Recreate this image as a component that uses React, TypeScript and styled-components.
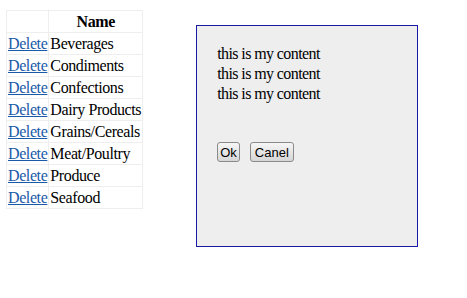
import React, { FC } from 'react';
import styled, { createGlobalStyle } from 'styled-components';

const categories = [
  'Beverages',
  'Condiments',
  'Confections',
  'Dairy Products',
  'Grains/Cereals',
  'Meat/Poultry',
  'Produce',
  'Seafood',
];

const GlobalStyle = createGlobalStyle`
  html, body {
    margin: 0;
    padding: 0;
    background: #ffffff;
  }
  body {
    font-family: "Liberation Serif", "Times New Roman", serif;
    font-size: 16px;
    color: #000000;
  }
`;

const App: FC = () => {
  const handleDelete = (name: string) => () => {
    console.log('delete', name);
  };

  return (
    <>
      <GlobalStyle />
      <Page>
        <Grid>
          <thead>
            <tr>
              <HeadCell />
              <HeadCell>Name</HeadCell>
            </tr>
          </thead>
          <tbody>
            {categories.map((name) => (
              <tr key={name}>
                <Cell>
                  <DeleteLink href="#" onClick={handleDelete(name)}>
                    Delete
                  </DeleteLink>
                </Cell>
                <Cell>{name}</Cell>
              </tr>
            ))}
          </tbody>
        </Grid>

        <Dialog>
          <Content>
            <p>this is my content</p>
            <p>this is my content</p>
            <p>this is my content</p>
          </Content>
          <Buttons>
            <Button $pad={2}>Ok</Button>
            <Button $pad={4}>Canel</Button>
          </Buttons>
        </Dialog>
      </Page>
    </>
  );
};

const Page = styled.div`
  display: flex;
  align-items: flex-start;
  padding: 10px 0 0 6px;
`;

const Grid = styled.table`
  border-collapse: collapse;
  border-style: solid;
  border-width: 1px;
  border-color: #e4e4e4 #a0a0a0 #a0a0a0 #e4e4e4;
  letter-spacing: -0.4px;
`;

const HeadCell = styled.th`
  height: 21px;
  padding: 0 1px;
  border: 1px solid #eeeeee;
  font-weight: bold;
  text-align: center;
  line-height: 20px;
`;

const Cell = styled.td`
  height: 21px;
  padding: 0 1px;
  border: 1px solid #eeeeee;
  line-height: 20px;
  white-space: nowrap;
`;

const DeleteLink = styled.a`
  color: #1a5aa8;
  text-decoration: underline;
`;

const Dialog = styled.div`
  margin: 15px 0 0 53px;
  width: 222px;
  height: 222px;
  box-sizing: border-box;
  border: 1px solid #1818a8;
  background: #eeeeee;
  padding: 18px 20px 0;
`;

const Content = styled.div`
  p {
    margin: 0;
    line-height: 20px;
    letter-spacing: -0.6px;
  }
`;

const Buttons = styled.div`
  display: flex;
  gap: 10px;
  margin-top: 38px;
`;

const Button = styled.button<{ $pad: number }>`
  font-family: "Liberation Sans", Arial, sans-serif;
  font-size: 13px;
  height: 20px;
  padding: 0 ${({ $pad }) => $pad}px;
  border: 1px solid #8a8a8a;
  border-radius: 3px;
  background: linear-gradient(#f6f6f6, #d6d6d6);
  color: #000000;
`;

export default App;
